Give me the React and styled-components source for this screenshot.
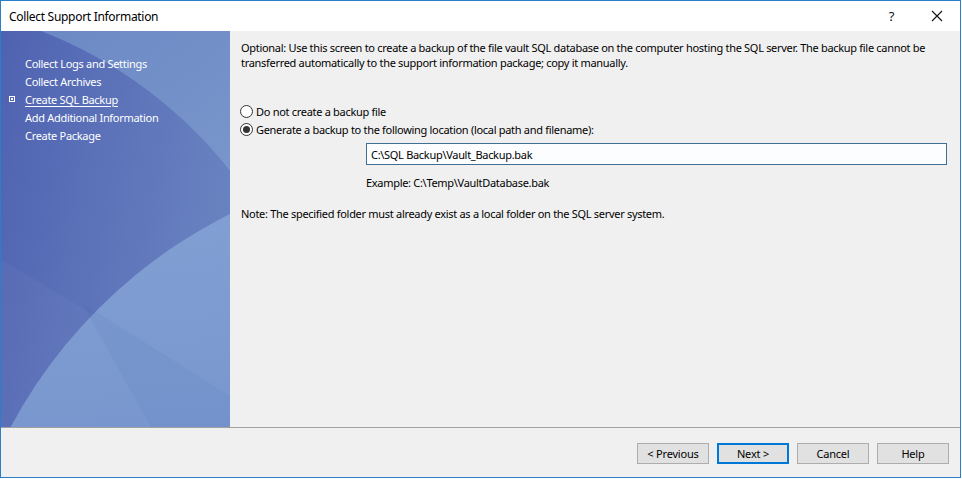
import React from 'react'
import styled, { createGlobalStyle } from 'styled-components';

const GlobalStyle = createGlobalStyle`
  html, body {
    margin: 0;
    padding: 0;
    background: #ffffff;
  }
  * {
    box-sizing: border-box;
  }
`;

const steps = [
  { label: 'Collect Logs and Settings' },
  { label: 'Collect Archives' },
  { label: 'Create SQL Backup', current: true },
  { label: 'Add Additional Information' },
  { label: 'Create Package' },
];

const buttons = [
  { label: '< Previous' },
  { label: 'Next >', primary: true },
  { label: 'Cancel' },
  { label: 'Help' },
];

const SidebarArt = () => (
  <ArtSvg viewBox="0 0 229 397" preserveAspectRatio="none">
    <defs>
      <linearGradient id="base" x1="0" y1="0" x2="1" y2="0.3">
        <stop offset="0" stopColor="#4f62b1" />
        <stop offset="1" stopColor="#6882c0" />
      </linearGradient>
      <linearGradient id="top" x1="0" y1="0" x2="1" y2="1">
        <stop offset="0" stopColor="#6c89c5" />
        <stop offset="1" stopColor="#7896cb" />
      </linearGradient>
      <linearGradient id="arc" x1="0.2" y1="0" x2="0.3" y2="1">
        <stop offset="0" stopColor="#83a1d3" />
        <stop offset="0.45" stopColor="#7190cb" />
        <stop offset="1" stopColor="#586fbb" />
      </linearGradient>
    </defs>
    <rect width="229" height="397" fill="url(#base)" />
    <path d="M 40 0 L 229 0 L 229 140 A 447 447 0 0 0 40 0 Z" fill="url(#top)" />
    <path d="M 0 229 L 229 366 L 229 397 L 0 397 Z" fill="#ffffff" opacity="0.03" />
    <circle cx="455" cy="635" r="505" fill="url(#arc)" />
    <path d="M 80 272 L 229 366 L 229 397 L 150 397 Z" fill="#3b52a8" opacity="0.07" />
  </ArtSvg>
);

const App = () => {
  return (
    <>
      <GlobalStyle />
      <Window>
        <TitleBar>
          <Title>Collect Support Information</Title>
          <TitleButton>?</TitleButton>
          <TitleButton>
            <svg width="12" height="12" viewBox="0 0 12 12">
              <path d="M1 1 L11 11 M11 1 L1 11" stroke="#111" strokeWidth="1.1" fill="none" />
            </svg>
          </TitleButton>
        </TitleBar>

        <Body>
          <Sidebar>
            <SidebarArt />
            <StepList>
              {steps.map(step => (
                <Step key={step.label}>
                  <Bullet>{step.current && <BulletMark />}</Bullet>
                  <StepLabel current={step.current}>{step.label}</StepLabel>
                </Step>
              ))}
            </StepList>
          </Sidebar>

          <Content>
            <Intro>
              Optional: Use this screen to create a backup of the file vault SQL database on the computer hosting the SQL server. The backup file cannot be transferred automatically to the support information package; copy it manually.
            </Intro>

            <Options>
              <Option>
                <Radio />
                Do not create a backup file
              </Option>
              <Option>
                <Radio checked />
                Generate a backup to the following location (local path and filename):
              </Option>
            </Options>

            <PathBlock>
              <PathInput defaultValue="C:\SQL Backup\Vault_Backup.bak" />
              <Example>Example: C:\Temp\VaultDatabase.bak</Example>
            </PathBlock>

            <Note>Note: The specified folder must already exist as a local folder on the SQL server system.</Note>
          </Content>
        </Body>

        <Footer>
          {buttons.map(btn => (
            <Button key={btn.label} primary={btn.primary}>{btn.label}</Button>
          ))}
        </Footer>
      </Window>
    </>
  )
}

const Window = styled.div`
  width: 961px;
  height: 478px;
  border: 1px solid #2b7fc9;
  display: flex;
  flex-direction: column;
  background: #f0f0f0;
  font-family: "Noto Sans", "Open Sans", sans-serif;
  font-size: 11px;
  letter-spacing: -0.3px;
  color: #000;
  overflow: hidden;
`;

const TitleBar = styled.div`
  height: 30px;
  flex-shrink: 0;
  display: flex;
  align-items: center;
  background: #ffffff;
  padding-left: 8px;
`;

const Title = styled.div`
  flex: 1;
  font-size: 12px;
  letter-spacing: -0.3px;
  color: #000;
`;

const TitleButton = styled.div`
  width: 45px;
  height: 30px;
  display: flex;
  align-items: center;
  justify-content: center;
  font-size: 13px;
  color: #111;

  &:last-child {
    margin-right: 1px;
  }
`;

const Body = styled.div`
  height: 397px;
  flex-shrink: 0;
  display: flex;
  border-bottom: 1px solid #a0a0a0;
`;

const Sidebar = styled.div`
  position: relative;
  width: 229px;
  flex-shrink: 0;
  overflow: hidden;
`;

const ArtSvg = styled.svg`
  position: absolute;
  inset: 0;
  width: 100%;
  height: 100%;
`;

const StepList = styled.ul`
  position: relative;
  list-style: none;
  margin: 0;
  padding: 23px 0 0 8px;
`;

const Step = styled.li`
  display: flex;
  align-items: center;
  height: 18px;
  color: #ffffff;
`;

const Bullet = styled.span`
  width: 16px;
  display: flex;
  align-items: center;
`;

const BulletMark = styled.span`
  width: 6px;
  height: 6px;
  border: 1px solid #ffffff;
  background: #5265b4;
  box-shadow: inset 0 0 0 1px #5265b4, inset 0 0 0 3px #ffffff;
`;

const StepLabel = styled.span`
  text-decoration: ${({ current }) => (current ? 'underline' : 'none')};
  text-underline-offset: 2px;
  white-space: nowrap;
`;

const Content = styled.div`
  flex: 1;
  padding: 9px 14px 0 11px;
  display: flex;
  flex-direction: column;
`;

const Intro = styled.p`
  margin: 0;
  line-height: 15px;
`;

const Options = styled.div`
  margin-top: 32px;
  display: flex;
  flex-direction: column;
`;

const Option = styled.label`
  display: flex;
  align-items: center;
  height: 18px;
  gap: 3px;
  margin-left: -1px;
`;

const Radio = styled.span`
  width: 13px;
  height: 13px;
  border-radius: 50%;
  border: 1px solid #333333;
  background: #ffffff;
  display: flex;
  align-items: center;
  justify-content: center;

  &::after {
    content: '';
    width: 7px;
    height: 7px;
    border-radius: 50%;
    background: ${({ checked }) => (checked ? '#333333' : 'transparent')};
  }
`;

const PathBlock = styled.div`
  margin: 5px 0 0 125px;
  display: flex;
  flex-direction: column;
`;

const PathInput = styled.input`
  height: 22px;
  width: 581px;
  border: 1px solid #3f6f93;
  background: #fbfdff;
  padding: 0 4px;
  font-family: inherit;
  font-size: 11px;
  letter-spacing: -0.3px;
  color: #000;
  outline: none;
`;

const Example = styled.div`
  margin-top: 10px;
  line-height: 15px;
`;

const Note = styled.p`
  margin: 16px 0 0;
  line-height: 15px;
`;

const Footer = styled.div`
  flex: 1;
  display: flex;
  justify-content: flex-end;
  align-items: flex-start;
  gap: 8px;
  padding: 15px 11px 0 0;
`;

const Button = styled.button`
  width: 72px;
  height: 21px;
  font-family: inherit;
  font-size: 11px;
  letter-spacing: -0.2px;
  color: #000;
  background: #e1e1e1;
  border: 1px solid ${({ primary }) => (primary ? '#0078d7' : '#adadad')};
  box-shadow: ${({ primary }) => (primary ? 'inset 0 0 0 1px #0078d7' : 'none')};
  padding: 0;
`;

export default App
